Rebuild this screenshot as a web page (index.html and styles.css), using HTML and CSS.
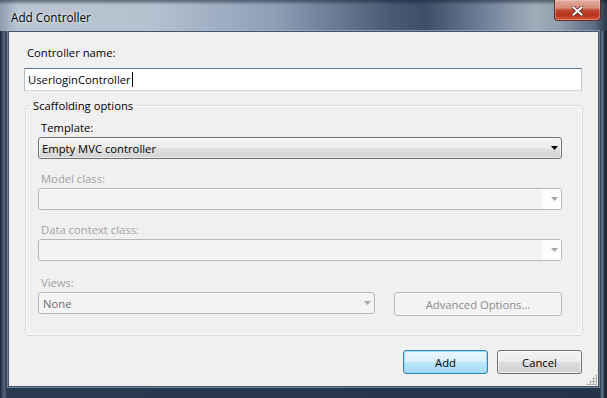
FILE: index.html
```html
<!DOCTYPE html>
<html>
<head>
<meta charset="utf-8">
<title>Add Controller</title>
<link rel="stylesheet" href="styles.css">
</head>
<body>
<div class="window">
  <div class="titlebar">
    <span class="title">Add Controller</span>
    <div class="close">
      <svg width="11" height="10" viewBox="0 0 11 10">
        <path d="M1.5 1.5 L9.5 8.5 M9.5 1.5 L1.5 8.5" stroke="#4a2a26" stroke-width="3.6" stroke-linecap="square" fill="none"/>
        <path d="M1.5 1.5 L9.5 8.5 M9.5 1.5 L1.5 8.5" stroke="#ffffff" stroke-width="2" stroke-linecap="square" fill="none"/>
      </svg>
    </div>
  </div>
  <div class="client">
    <div class="lbl">Controller name:</div>
    <div class="textbox"><span>UserloginController</span><span class="caret"></span></div>
    <fieldset class="group">
      <legend>Scaffolding options</legend>
      <div class="field">
        <div class="lbl">Template:</div>
        <div class="combo"><span>Empty MVC controller</span><svg class="arrow" width="7" height="4" viewBox="0 0 7 4"><polygon points="0,0 7,0 3.5,4" fill="#000"/></svg></div>
      </div>
      <div class="field">
        <div class="lbl off">Model class:</div>
        <div class="combo dis"><span></span><span class="btnarea"><svg width="7" height="4" viewBox="0 0 7 4"><polygon points="0,0 7,0 3.5,4" fill="#a5a5a5"/></svg></span></div>
      </div>
      <div class="field">
        <div class="lbl off">Data context class:</div>
        <div class="combo dis"><span></span><span class="btnarea"><svg width="7" height="4" viewBox="0 0 7 4"><polygon points="0,0 7,0 3.5,4" fill="#a5a5a5"/></svg></span></div>
      </div>
      <div class="field views">
        <div class="lbl off">Views:</div>
        <div class="row">
          <div class="combo dis short"><span class="none">None</span><svg class="arrow" width="7" height="4" viewBox="0 0 7 4"><polygon points="0,0 7,0 3.5,4" fill="#a5a5a5"/></svg></div>
          <div class="btn disabled">Advanced Options...</div>
        </div>
      </div>
    </fieldset>
    <div class="buttons">
      <div class="btn default">Add</div>
      <div class="btn">Cancel</div>
    </div>
    <div class="grip"></div>
  </div>
</div>
</body>
</html>
```
FILE: styles.css
```css
html, body {
  margin: 0;
  padding: 0;
}
body {
  font-family: "Open Sans", "Noto Sans", sans-serif;
  font-size: 11.25px;
  color: #000;
  background: #1e2a3a;
}
.window {
  width: 607px;
  height: 398px;
  box-sizing: border-box;
  background: linear-gradient(90deg, #1a2433 0, #56667c 4px, #2b3a4f 7px, #24334a 600px, #6a7a90 602px, #1b2432 605px);
  display: flex;
  flex-direction: column;
}
.titlebar {
  height: 31px;
  flex: none;
  display: flex;
  justify-content: space-between;
  align-items: flex-start;
  padding: 0 6px 0 11px;
  background:
    linear-gradient(180deg, rgba(20,30,45,.55) 0, rgba(20,30,45,0) 5px),
    linear-gradient(90deg, #8d9db0 0, #b9c5d2 3%, #b4c1cf 25%, #8ea0b6 45%, #4a5c75 64%, #3c4e67 70%, #71839a 80%, #a1acb9 88%, #949fae 92%, #5a6a80 98%, #2a3748 100%);
}
.title {
  margin-top: 10px;
  line-height: 15px;
  font-size: 11.75px;
  text-shadow: 0 0 6px rgba(255,255,255,.8), 0 0 2px rgba(255,255,255,.6);
}
.close {
  width: 47px;
  height: 21px;
  box-sizing: border-box;
  border: 1px solid #5a2e2a;
  border-top: none;
  border-radius: 0 0 4px 4px;
  background: linear-gradient(180deg, #e2aca0 0%, #d68b7a 40%, #c24a35 50%, #b5321d 75%, #d8583a 100%);
  box-shadow: inset 0 0 0 1px rgba(255,220,210,.35);
  display: flex;
  align-items: center;
  justify-content: center;
  padding-top: 2px;
}
.client {
  position: relative;
  margin: 0 8px;
  height: 356px;
  box-sizing: border-box;
  border: 1px solid #44556b;
  box-shadow: 0 0 0 1px rgba(170,185,205,.55);
  background: #f0f0f0;
  padding: 13px 16px 0 15px;
}
.lbl {
  line-height: 15px;
  height: 15px;
  margin-left: 3px;
  white-space: nowrap;
}
.lbl.off {
  color: #a3a3a3;
}
.textbox {
  margin-top: 8px;
  height: 23px;
  box-sizing: border-box;
  border: 1px solid;
  border-color: #5e7389 #b8c6d4 #cdd8e3 #afbecd;
  background: #fff;
  padding-left: 3px;
  display: flex;
  align-items: center;
  line-height: 15px;
}
.caret {
  width: 1px;
  height: 15px;
  background: #000;
  margin-left: 1px;
}
.group {
  margin: 7px -1px 0 1px;
  padding: 7px 20px 19px 12px;
  border: 1px solid #d5dbe0;
  border-radius: 3px;
  box-shadow: inset 0 0 0 1px #fbfbfb;
  min-width: 0;
}
.group legend {
  padding: 0 2px;
  margin-left: -7px;
  line-height: 15px;
}
.field {
  display: flex;
  flex-direction: column;
  gap: 2px;
  margin-bottom: 12px;
}
.field.views {
  padding-top: 2px;
  margin-bottom: 0;
}
.combo {
  height: 22px;
  box-sizing: border-box;
  border: 1px solid #707070;
  border-radius: 3px;
  background: linear-gradient(180deg, #f3f3f3 0%, #ececec 50%, #e0e0e0 52%, #d4d4d4 100%);
  box-shadow: inset 0 0 0 1px rgba(255,255,255,.55);
  display: flex;
  align-items: center;
  padding-left: 3px;
  line-height: 15px;
}
.combo .arrow {
  margin-left: auto;
  margin-right: 3px;
}
.combo.dis {
  border-color: #b5b9bc;
  background: #f4f4f4;
  box-shadow: none;
  padding-right: 0;
}
.btnarea {
  margin-left: auto;
  width: 19px;
  align-self: stretch;
  background: #fdfdfd;
  border-radius: 0 2px 2px 0;
  display: flex;
  align-items: center;
  justify-content: flex-end;
  padding-right: 3px;
  box-sizing: border-box;
}
.none {
  color: #6d6d6d;
  padding-left: 1px;
}
.row {
  display: flex;
  align-items: flex-start;
  gap: 19px;
}
.combo.short {
  width: 337px;
  flex: none;
}
.btn {
  height: 24px;
  box-sizing: border-box;
  border: 1px solid #707070;
  border-radius: 3px;
  background: linear-gradient(180deg, #f2f2f2 0%, #ebebeb 50%, #dddddd 52%, #cfcfcf 100%);
  box-shadow: inset 0 0 0 1px rgba(255,255,255,.7);
  display: flex;
  align-items: center;
  justify-content: center;
  line-height: 15px;
  width: 85px;
}
.btn.disabled {
  flex: 1;
  border-color: #b5b9bc;
  background: #f4f4f4;
  box-shadow: none;
  color: #8a8a8a;
}
.btn.default {
  border-color: #3c7fb1;
  background: linear-gradient(180deg, #eaf6fd 0%, #d9f0fc 50%, #bee6fd 52%, #a7d9f5 100%);
  box-shadow: inset 0 0 0 1px rgba(140,220,250,.9);
}
.buttons {
  margin-top: 14px;
  display: flex;
  justify-content: flex-end;
  gap: 9px;
}
.grip {
  position: absolute;
  right: 1px;
  bottom: 1px;
  width: 11px;
  height: 11px;
  background:
    radial-gradient(circle at 1.5px 1.5px, #b0b0b0 1px, transparent 1.2px) 0 0 / 3px 3px;
  clip-path: polygon(100% 0, 100% 100%, 0 100%);
}
```
